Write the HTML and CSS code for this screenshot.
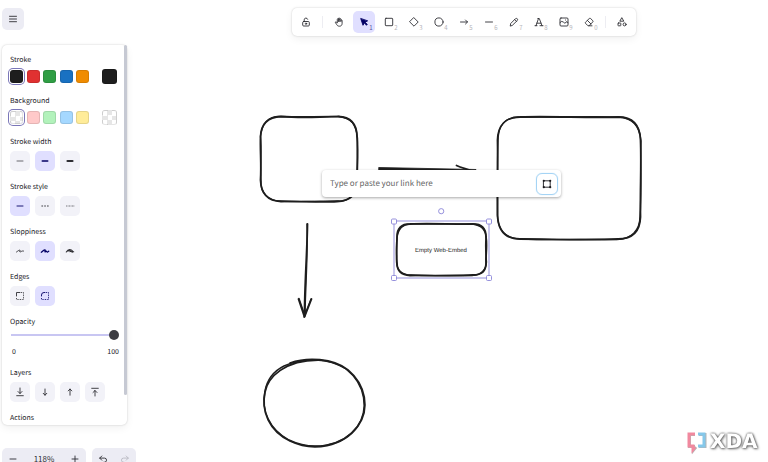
FILE: index.html
```html
<!DOCTYPE html>
<html lang="en">
<head>
  <meta charset="UTF-8" />
  <meta name="viewport" content="width=device-width, initial-scale=1.0" />
  <title>Whiteboard</title>
  <link rel="stylesheet" href="styles.css">
</head>
<body>
  <svg class="canvas" role="img" aria-label="Drawing">
    <!-- small rectangle -->
    <path d="M281 116.500C300 118 325 117 338 116.500C351 117 357 124 357 137C358.500 150 357 170 357 182C357 195 350 201 337 201.500C320 202.500 300 201 281 201.500C267 201 261 193 260.500 180C261.500 165 260 150 260.500 137C261 124 268 117 281 116.500Z" />
    <path class="thin" d="M280 116.500C300 117.500 320 116 339 116.500C352 118 356 125 357.500 138C357 155 358 165 356.500 181C357 194 349 202 338 201C320 201 300 202.500 280 201C268 201 260 192 261 181C260 165 262 150 260.500 136C262 123 269 116 280 116.500Z" />
    <!-- large rectangle -->
    <path d="M520 117C550 116 590 118 618 117C633 117 640 126 640.500 140C641.500 165 640 190 640.500 217C640 232 632 239 618 239C590 240.500 550 239 520 239C505 239 498 230 497.500 215C497 190 498 165 497.500 140C498 125 506 117 520 117Z" />
    <path class="thin" d="M519 117C550 117.500 590 116 619 117C634 118 640 127 641 141C640 165 642 190 640 216C640 231 631 239 617 239.500C590 239 550 240.500 521 239C505 239 498 229 497.500 216C498 190 497 165 498 141C498 126 505 117 519 117Z" />
    <!-- arrows -->
    <path class="taper" d="M379 167.500L476 169.500V170.500L379 170Z" />
    <path d="M456.500 165.500C462 168 467 169 473 171.500" />
    <path d="M307.500 224C307 255 304.500 285 304.500 316M298.500 299L304.500 317L311.500 299" />
    <path class="thin" d="M307 224C308 255 305.500 285 305 315M299 298.500L305 316M311 299L304 317" />
    <!-- ellipse -->
    <path d="M290 363C307 357 333 358 348 370C366 385 370 409 358 426C343 447 313 452 290 441C269 431 261 411 265 392C268 377 285 360 318 360" />
    <path class="thin" d="M284 366C303 357 329 358 346 369C366 385 369 410 357 427C342 447 312 451 289 440C269 429 261 410 265 391C267 380 274 371 284 366" />
    <!-- web embed -->
    <path d="M410 224C430 223 455 224.500 473 224C482 224 486 229 486 237C487.500 247 485.500 255 486 263C486 271 481 275 473 275C455 276.500 430 275 410 275.500C401 275 397 271 397 263C396 254 397 245 397 237C397 228 402 224 410 224Z" />
    <path class="thin" d="M411 224C430 224.500 455 223.500 472 224C481 225 486 229 486 238C485 247 486 255 486.500 262C486 271 480 275 472 275.500C455 275 430 276.500 411 275C402 275 397 270 396.500 262C397 254 396 245 397 238C398 229 402 224 411 224Z" />
    <text x="441" y="252" text-anchor="middle">Empty Web-Embed</text>
    <!-- selection -->
    <g class="selection">
      <rect x="394" y="221" width="95" height="57" />
      <rect x="391.500" y="219" width="5" height="5" rx="1" />
      <rect x="486.500" y="219" width="5" height="5" rx="1" />
      <rect x="391.500" y="275.500" width="5" height="5" rx="1" />
      <rect x="486.500" y="275.500" width="5" height="5" rx="1" />
      <circle cx="441.200" cy="211.200" r="2.600" />
    </g>
  </svg>

  <div class="app">
    <div class="sidebar">
      <button class="menu-btn" aria-label="Menu">
        <svg class="icon" viewBox="0 0 10 10"><path d="M1.500 2.300h7M1.500 5h7M1.500 7.700h7" /></svg>
      </button>

      <div class="panel">
        <section>
          <h3>Stroke</h3>
          <div class="colors">
            <div class="swatches">
              <button class="swatch black active" aria-label="Black"></button>
              <button class="swatch red" aria-label="Red"></button>
              <button class="swatch green" aria-label="Green"></button>
              <button class="swatch blue" aria-label="Blue"></button>
              <button class="swatch orange" aria-label="Orange"></button>
            </div>
            <button class="swatch current black" aria-label="Current stroke"></button>
          </div>
        </section>
        <section>
          <h3>Background</h3>
          <div class="colors">
            <div class="swatches">
              <button class="swatch clear active" aria-label="Transparent"></button>
              <button class="swatch pink" aria-label="Pink"></button>
              <button class="swatch mint" aria-label="Mint"></button>
              <button class="swatch sky" aria-label="Sky"></button>
              <button class="swatch yellow" aria-label="Yellow"></button>
            </div>
            <button class="swatch current clear" aria-label="Current background"></button>
          </div>
        </section>
        <section>
          <h3>Stroke width</h3>
          <div class="options">
            <button aria-label="Thin"><svg class="icon" viewBox="0 0 10 10"><path d="M2 5h6" stroke-width=".7" /></svg></button>
            <button class="active" aria-label="Bold"><svg class="icon" viewBox="0 0 10 10"><path d="M2.300 5h5.400" stroke-width="1.600" /></svg></button>
            <button aria-label="Extra bold"><svg class="icon" viewBox="0 0 10 10"><path d="M2.500 5h5" stroke-width="2.200" /></svg></button>
          </div>
        </section>
        <section>
          <h3>Stroke style</h3>
          <div class="options">
            <button class="active" aria-label="Solid"><svg class="icon" viewBox="0 0 10 10"><path d="M2 5h6" /></svg></button>
            <button aria-label="Dashed"><svg class="icon" viewBox="0 0 10 10"><path d="M1.800 5h.9M4.600 5h.9M7.400 5h.9" /></svg></button>
            <button aria-label="Dotted"><svg class="icon" viewBox="0 0 10 10"><path d="M1.500 5h.1M3 5h.1M4.500 5h.1M6 5h.1M7.500 5h.1M8.800 5h.1" stroke-width=".7" /></svg></button>
          </div>
        </section>
        <section>
          <h3>Sloppiness</h3>
          <div class="options">
            <button aria-label="Architect"><svg class="icon" viewBox="0 0 10 10"><path d="M1.500 6C3 5 4 4 4.800 4S4 6 5 6S6.500 4.600 8.500 5" /></svg></button>
            <button class="active" aria-label="Artist"><svg class="icon" viewBox="0 0 10 10"><path d="M1.300 6.200C3 5 4 3.600 4.900 3.800S4.300 6.200 5.300 5.800S6 4.800 6.700 5.600S7.800 6 8.700 5.200" stroke-width="1.300" /></svg></button>
            <button aria-label="Cartoonist"><svg class="icon" viewBox="0 0 10 10"><path d="M1.300 6C2.500 4 4.500 3 6.300 4S7.500 6 8.700 5.800M3 5.200C5 3.400 5.500 4.600 5 5.400S6.500 4.600 7.300 6.300" stroke-width="1.100" /></svg></button>
          </div>
        </section>
        <section>
          <h3>Edges</h3>
          <div class="options">
            <button aria-label="Sharp"><svg class="icon" viewBox="0 0 10 10"><path d="M1.500 5V1.500H5" /><path class="dots" d="M6.500 1.500h2v7H1.500V6.500" /></svg></button>
            <button class="active" aria-label="Round"><svg class="icon" viewBox="0 0 10 10"><path d="M1.500 5V4Q1.500 1.500 4 1.500H5" /><path class="dots" d="M6.500 1.500h2v7H1.500V6.500" /></svg></button>
          </div>
        </section>
        <section>
          <h3><label for="opacity">Opacity</label></h3>
          <input type="range" id="opacity" min="0" max="100" value="100" />
          <div class="range-values"><span>0</span><span>100</span></div>
        </section>
        <section>
          <h3>Layers</h3>
          <div class="options">
            <button aria-label="Send to back"><svg class="icon" viewBox="0 0 10 10"><path d="M5 1v5.500M3 4.500l2 2l2-2M1.700 8.700h6.600" /></svg></button>
            <button aria-label="Send backward"><svg class="icon" viewBox="0 0 10 10"><path d="M5 2v6.200M3.200 6.300L5 8.200l1.800-1.900" /></svg></button>
            <button aria-label="Bring forward"><svg class="icon" viewBox="0 0 10 10"><path d="M5 8.200V2M3.200 3.900L5 2l1.800 1.900" /></svg></button>
            <button aria-label="Bring to front"><svg class="icon" viewBox="0 0 10 10"><path d="M5 9V3.500M3 5.500l2-2l2 2M1.700 1.300h6.600" /></svg></button>
          </div>
        </section>
        <section>
          <h3>Actions</h3>
        </section>
      </div>

      <div class="footer">
        <div class="group">
          <button aria-label="Zoom out"><svg class="icon" viewBox="0 0 10 10"><path d="M2 5h6" /></svg></button>
          <button class="zoom-value">118%</button>
          <button aria-label="Zoom in"><svg class="icon" viewBox="0 0 10 10"><path d="M2 5h6M5 2v6" /></svg></button>
        </div>
        <div class="group">
          <button aria-label="Undo"><svg class="icon" viewBox="0 0 10 10"><path d="M3.800 6.200L1.700 4.100L3.800 2M1.700 4.100H6.500a2 2 0 0 1 0 4.100H6" /></svg></button>
          <button aria-label="Redo" disabled><svg class="icon" viewBox="0 0 10 10"><path d="M6.200 6.200L8.300 4.100L6.200 2M8.300 4.100H3.500a2 2 0 0 0 0 4.100H4" /></svg></button>
        </div>
      </div>
    </div>

    <div class="top">
      <div class="toolbar">
        <button aria-label="Lock"><svg class="icon" viewBox="0 0 10 10"><rect x="1.700" y="4.500" width="6.600" height="4.500" rx="1" /><circle cx="5" cy="6.700" r=".7" /><path d="M3.200 4.500V2.800a1.800 1.800 0 0 1 3.500-.5" /></svg></button>
        <span class="divider"></span>
        <button aria-label="Hand"><svg class="icon" viewBox="0 0 10 10"><path d="M3.300 5.500V2.300a.6.600 0 0 1 1.200 0V4.500M4.500 2.300V1.500a.6.600 0 0 1 1.200 0v3M5.700 2.300a.6.600 0 0 1 1.200 0v2.300M6.900 3.500a.6.600 0 0 1 1.200 0v3C8.100 8.200 7 9.200 5.500 9.200S3.300 8.600 2.700 7.600L1.400 5.500C1.200 4.700 2 4.500 2.500 5l.8.900" /></svg></button>
        <button class="active" aria-label="Selection"><svg class="icon filled" viewBox="0 0 10 10"><path d="M1.800 1.800L4 8.300L5.300 6L7.500 8.200L8.300 7.400L6 5.200L8.300 4Z" /></svg><span class="key">1</span></button>
        <button aria-label="Rectangle"><svg class="icon" viewBox="0 0 10 10"><rect x="1.300" y="1.300" width="7.400" height="7.400" rx=".7" /></svg><span class="key">2</span></button>
        <button aria-label="Diamond"><svg class="icon" viewBox="0 0 10 10"><path d="M5 .8L9.200 5L5 9.200L.8 5Z" /></svg><span class="key">3</span></button>
        <button aria-label="Ellipse"><svg class="icon" viewBox="0 0 10 10"><circle cx="5" cy="5" r="4.100" /></svg><span class="key">4</span></button>
        <button aria-label="Arrow"><svg class="icon" viewBox="0 0 10 10"><path d="M1.500 5h7M6.500 3l2 2l-2 2" /></svg><span class="key">5</span></button>
        <button aria-label="Line"><svg class="icon" viewBox="0 0 10 10"><path d="M1.500 5h7" /></svg><span class="key">6</span></button>
        <button aria-label="Draw"><svg class="icon" viewBox="0 0 10 10"><path d="M1.300 8.700L1.700 6.500L6.500 1.700Q7.400 1 8.300 1.800Q9 2.600 8.300 3.500L3.500 8.200ZM5.700 2.600l1.800 1.800" /></svg><span class="key">7</span></button>
        <button aria-label="Text"><svg class="icon" viewBox="0 0 10 10"><path d="M1 8.700h2M6 8.700h3M2 8.700L4.500 1.500M2.800 6.200h4.200M3.800 1.500h1.500L8 8.700" /></svg><span class="key">8</span></button>
        <button aria-label="Image"><svg class="icon" viewBox="0 0 10 10"><rect x="1" y="1" width="8" height="8" rx="1" /><path d="M1 5.500Q3 3.200 4.500 5.200T7 5.300T9 5.800M6.500 3h.1" /></svg><span class="key">9</span></button>
        <button aria-label="Eraser"><svg class="icon" viewBox="0 0 10 10"><path d="M8 8.800H4L1.500 6.300Q1 5.700 1.500 5.200L5.300 1.500Q6 1 6.600 1.500L8.800 3.700Q9.300 4.300 8.800 4.900L5 8.800M3.500 3.500L7 7" /></svg><span class="key">0</span></button>
        <span class="divider"></span>
        <button aria-label="More tools"><svg class="icon" viewBox="0 0 10 10"><path d="M5 1L6.800 4.200H3.200Z" /><rect x="1" y="6" width="2.800" height="2.800" rx=".4" /><circle cx="7.600" cy="7.400" r="1.500" /></svg></button>
      </div>
    </div>
  </div>

  <form class="link-popup">
    <input type="text" placeholder="Type or paste your link here" aria-label="Link" />
    <button type="button" aria-label="Link to object">
      <svg class="icon" viewBox="0 0 10 10"><path d="M1.800 1.800h6.400v6.400H1.800Z" /><path class="corners" d="M1.800 1.800h.01M8.200 1.800h.01M1.800 8.200h.01M8.200 8.200h.01" /></svg>
    </button>
  </form>

  <svg class="watermark" viewBox="0 0 76 28" role="img" aria-label="XDA">
    <path class="shade" d="M9 5.500H3.500V17.500H7.500V21L10 18M13 5.500H19V17.500H13" />
    <path class="pink-part" d="M9 5H3V17H7V20.500L9 18" />
    <path class="blue-part" d="M12 5H18V17H12" />
    <text x="24" y="19">XDA</text>
  </svg>
</body>
</html>
```
FILE: styles.css
```css
* {
  box-sizing: border-box;
}
body {
  margin: 0;
  height: 100vh;
  overflow: hidden;
  position: relative;
  background: #fff;
  color: #1b1b1f;
  font-family: "Noto Sans CJK SC", "Open Sans", sans-serif;
  font-size: 7px;
  line-height: 12px;
  text-rendering: geometricPrecision;
}
button {
  display: flex;
  align-items: center;
  justify-content: center;
  position: relative;
  margin: 0;
  padding: 0;
  border: 0;
  border-radius: 5px;
  background: none;
  color: #2e2e33;
  font: inherit;
}
.icon {
  width: 10px;
  height: 10px;
  fill: none;
  stroke: currentColor;
  stroke-width: 0.9;
  stroke-linecap: round;
  stroke-linejoin: round;
}
.icon.filled {
  fill: currentColor;
}
.icon .dots {
  stroke-dasharray: 0.1 1.6;
}
.icon .corners {
  stroke-width: 2.2;
}

/* drawing */
.canvas {
  position: absolute;
  inset: 0;
  width: 100%;
  height: 100%;
}
.canvas path {
  fill: none;
  stroke: #1e1e1e;
  stroke-width: 1.8;
  stroke-linecap: round;
  stroke-linejoin: round;
}
.canvas path.thin {
  stroke-width: 1.4;
}
.canvas path.taper {
  fill: #1e1e1e;
  stroke-width: 0.8;
}
.canvas text {
  font-family: "Liberation Sans", sans-serif;
  font-size: 6px;
  fill: #1e1e1e;
}
.selection {
  fill: #fff;
  stroke: #8a85d8;
  stroke-width: 0.9;
}
.selection rect:first-child {
  fill: none;
}

/* layout */
.app {
  display: grid;
  grid-template-columns: 125px 1fr;
  gap: 32px;
  padding: 8px 0 0 2px;
}
.top {
  display: flex;
  justify-content: center;
  align-items: flex-start;
}
.sidebar {
  position: relative;
}
.menu-btn {
  width: 22px;
  height: 22px;
  background: #ececf4;
}

/* properties panel */
.panel {
  position: relative;
  margin-top: 15px;
  padding: 8px 8px 1px;
  border-radius: 5px;
  background: #fff;
  box-shadow: 0 0 2px rgba(0, 0, 0, 0.2), 0 3px 8px rgba(0, 0, 0, 0.06);
}
.panel::after {
  content: "";
  position: absolute;
  top: 0;
  right: 0;
  width: 3px;
  height: 92%;
  border-radius: 2px;
  background: #c6c9d3;
}
section {
  margin-bottom: 9px;
}
section:last-child {
  margin-bottom: 0;
}
h3 {
  margin: 0 0 3px;
  padding-top: 1px;
  font-size: 7px;
  font-weight: 400;
  line-height: 12px;
}
section:last-child h3 {
  margin: 0;
}
.colors {
  display: flex;
  align-items: flex-start;
  justify-content: space-between;
  height: 16px;
  padding-right: 2px;
}
.swatches {
  display: flex;
  justify-content: space-between;
  width: 79px;
  padding-top: 1px;
}
.swatch {
  width: 13px;
  height: 13px;
  border: 1px solid rgba(0, 0, 0, 0.1);
  border-radius: 3px;
}
.swatch.active {
  box-shadow: 0 0 0 1px #fff, 0 0 0 2px #7a76b8;
}
.swatch.current {
  width: 15px;
  height: 15px;
}
.black { background: #1e1e1e; }
.red { background: #e03131; }
.green { background: #2f9e44; }
.blue { background: #1971c2; }
.orange { background: #f08c00; }
.pink { background: #ffc9c9; }
.mint { background: #b2f2bb; }
.sky { background: #a5d8ff; }
.yellow { background: #ffec99; }
.clear {
  background: repeating-conic-gradient(#e6e6e6 0 25%, #fff 0 50%) 0 0 / 9px 9px;
}
.options {
  display: flex;
  gap: 5px;
}
.options button {
  width: 20px;
  height: 20px;
  background: #f2f2f8;
}
.options button.active,
.toolbar button.active {
  background: #e0dfff;
  color: #030064;
}
input[type="range"] {
  display: block;
  appearance: none;
  width: 100%;
  height: 8px;
  margin: 0;
  background: linear-gradient(#c8c6f2, #c8c6f2) center / 98% 2px no-repeat;
}
input[type="range"]::-webkit-slider-thumb {
  appearance: none;
  width: 10px;
  height: 10px;
  border-radius: 50%;
  background: #3d3d42;
}
.range-values {
  display: flex;
  justify-content: space-between;
  padding: 7px 0 0 2px;
  margin-bottom: -1px;
}

/* zoom and history */
.footer {
  display: flex;
  gap: 6px;
  width: 134px;
  margin-top: 23px;
}
.group {
  display: flex;
  justify-content: space-between;
  border-radius: 5px;
  background: #ececf4;
}
.group:first-child {
  flex: 1;
}
.group button {
  width: 22px;
  height: 22px;
}
.group .zoom-value {
  font-size: 8px;
}
.group button:disabled {
  color: #b9b9c2;
}

/* toolbar */
.toolbar {
  display: flex;
  align-items: center;
  gap: 3px;
  padding: 3px;
  border-radius: 5px;
  background: #fff;
  box-shadow: 0 0 2px rgba(0, 0, 0, 0.2), 0 3px 8px rgba(0, 0, 0, 0.06);
}
.toolbar button {
  width: 22px;
  height: 22px;
}
.divider {
  width: 1px;
  height: 12px;
  margin: 0 2px;
  background: #ededf2;
}
.key {
  position: absolute;
  right: 2px;
  bottom: 2px;
  color: #b4b4ba;
  font-size: 6px;
  line-height: 6px;
}
.active .key {
  color: #55529a;
}

/* link popup */
.link-popup {
  position: absolute;
  top: 170px;
  left: 322px;
  display: flex;
  align-items: center;
  gap: 8px;
  width: 239px;
  padding: 3px 3px 2px 8px;
  border-radius: 4px;
  background: #fff;
  box-shadow: 0 1px 3px rgba(0, 0, 0, 0.35);
}
.link-popup input {
  flex: 1;
  min-width: 0;
  padding: 0;
  border: 0;
  outline: 0;
  background: none;
  font: inherit;
  font-size: 8px;
  text-rendering: inherit;
}
.link-popup input::placeholder {
  color: #666;
}
.link-popup button {
  width: 22px;
  height: 22px;
  border: 1px solid #a5d4f5;
  border-radius: 6px;
  box-shadow: 0 0 1px #a5d4f5;
  color: #1b1b1f;
}

/* watermark */
.watermark {
  position: absolute;
  right: 6px;
  bottom: 5px;
  width: 76px;
  height: 28px;
}
.watermark path {
  fill: none;
  stroke-width: 3;
}
.watermark .shade { stroke: #b5b5b5; }
.watermark .pink-part { stroke: #f1899f; }
.watermark .blue-part { stroke: #85c8ea; }
.watermark text {
  fill: #fff;
  font-family: "DejaVu Sans", sans-serif;
  font-size: 20px;
  font-weight: 700;
  filter: drop-shadow(0 0 1px rgba(0, 0, 0, 0.7)) drop-shadow(1px 1px 1px rgba(0, 0, 0, 0.4));
}
```
